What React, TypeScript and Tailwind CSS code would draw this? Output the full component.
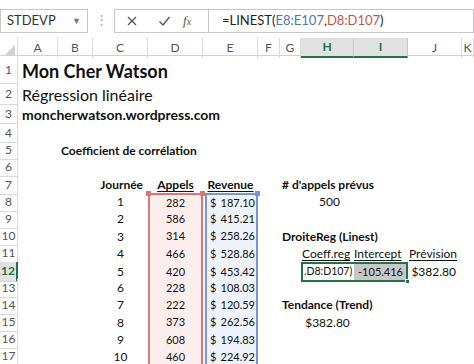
import type { ReactNode } from "react";

const GRID = "grid grid-cols-[18px_40px_35px_55px_55px_55px_22px_21px_53px_54px_54px_1fr]";
const LETTERS = ["A", "B", "C", "D", "E", "F", "G", "H", "I", "J", "K"];

type Cells = Partial<Record<string, ReactNode>>;

const rowsData = [
    [1, "282", "187.10"],
    [2, "586", "415.21"],
    [3, "314", "258.26"],
    [4, "466", "528.86"],
    [5, "420", "453.42"],
    [6, "228", "108.03"],
    [7, "222", "120.59"],
    [8, "373", "262.56"],
    [9, "608", "194.83"],
    [10, "460", "224.92"],
] as const;

const cellClass = (col: string, n: number) => {
    if (n >= 8 && col === "D")
        return n === 8
            ? "bg-[#fdeeee] border-x-2 border-t-2 border-[#e07474] justify-center text-[11px]"
            : "bg-[#fdeeee] border-x-2 border-[#e07474] justify-center text-[11px]";
    if (n >= 8 && col === "E")
        return n === 8
            ? "ml-[2px] bg-[#eef3fb] border-x-2 border-t-2 border-[#7895cf] justify-between pl-[3px] pr-[1px] text-[11px]"
            : "ml-[2px] bg-[#eef3fb] border-x-2 border-[#7895cf] justify-between pl-[3px] pr-[1px] text-[11px]";
    if (n === 12 && col === "H") return "border-y-2 border-l-2 border-[#217346] pl-[1px] text-[10.5px]";
    if (n === 12 && col === "I") return "border-y-2 border-r-2 border-[#217346] justify-end text-[11px]";
    return "";
};

const Row = ({ n, h, cells, active }: { n: number; h: string; cells: Cells; active?: boolean }) => (
    <div className={`${GRID} ${h}`}>
        <div
            className={
                active
                    ? "flex items-center justify-center border-r-2 border-b border-[#217346] border-b-[#d4d4d4] bg-[#e1e1e1] text-[12px] font-bold text-[#217346]"
                    : "flex items-center justify-center border-r border-b border-[#dadada] text-[12px] text-[#555]"
            }
        >
            {n}
        </div>
        {LETTERS.map((l) => (
            <div key={l} className={`relative flex items-center whitespace-nowrap ${cellClass(l, n)}`}>
                {cells[l]}
            </div>
        ))}
    </div>
);

const App = () => {
    return (
        <div className="h-[364px] w-[474px] overflow-hidden bg-white font-['Lato',sans-serif] text-[12px] text-[#111]">
            {/* formula bar */}
            <div className="flex h-[38px] items-start pt-[9px]">
                <div className="flex h-[24px] w-[88px] items-center justify-between border border-[#c6c6c6] pl-[6px] pr-[6px] text-[13px] text-[#333]">
                    <span>STDEVP</span>
                    <span className="text-[9px] text-[#777]">▼</span>
                </div>
                <div className="flex w-[26px] justify-center pt-[4px] text-[13px] leading-none text-[#aaa]">⋮</div>
                <div className="flex h-[24px] w-[94px] items-center border-y border-l border-[#c6c6c6] text-[#555]">
                    <svg width="12" height="12" viewBox="0 0 12 12" className="ml-[11px]">
                        <path d="M2 2 L10 10 M10 2 L2 10" stroke="#555" strokeWidth="1.3" />
                    </svg>
                    <svg width="13" height="12" viewBox="0 0 13 12" className="ml-[20px]">
                        <path d="M1.5 6.5 L5 10 L11.5 2" stroke="#555" strokeWidth="1.4" fill="none" />
                    </svg>
                    <span className="ml-[12px] font-['Liberation_Serif',serif] text-[13px] italic text-[#555]">
                        f<span className="text-[10px]">x</span>
                    </span>
                </div>
                <div className="flex h-[24px] flex-1 items-center border border-[#c6c6c6] pl-[13px] text-[13px] text-[#222]">
                    =LINEST(<span className="text-[#4f74bd]">E8:E107</span>,<span className="text-[#c25353]">D8:D107</span>)
                </div>
            </div>

            {/* column headers */}
            <div className={`${GRID} h-[18px] border-b border-[#d0d0d0] text-[12px] text-[#555]`}>
                <div className="flex items-end justify-end border-r border-[#dadada] pb-[2px] pr-[2px]">
                    <svg width="11" height="11" viewBox="0 0 11 11">
                        <path d="M11 0 L11 11 L0 11 Z" fill="#d0d0d0" />
                    </svg>
                </div>
                {LETTERS.map((l) =>
                    l === "H" || l === "I" ? (
                        <div
                            key={l}
                            className="flex items-center justify-center border-r border-b-2 border-[#c6c6c6] border-b-[#217346] bg-[#e1e1e1] font-bold text-[#217346]"
                        >
                            {l}
                        </div>
                    ) : (
                        <div key={l} className="flex items-center justify-center border-r border-[#dadada]">
                            {l}
                        </div>
                    )
                )}
            </div>

            <Row
                n={1}
                h="h-[28px]"
                cells={{
                    A: <span className="self-end pl-[4px] text-[18px] leading-[26px] font-bold">Mon Cher Watson</span>,
                }}
            />
            <Row
                n={2}
                h="h-[21px]"
                cells={{ A: <span className="self-end pl-[4px] text-[16px] leading-[20px]">Régression linéaire</span> }}
            />
            <Row
                n={3}
                h="h-[19px]"
                cells={{
                    A: <span className="self-end pl-[4px] text-[14px] leading-[18px] font-bold">moncherwatson.wordpress.com</span>,
                }}
            />
            <Row n={4} h="h-[17.2px]" cells={{}} />
            <Row
                n={5}
                h="h-[17.2px]"
                cells={{ B: <span className="pl-[3px] font-bold">Coefficient de corrélation</span> }}
            />
            <Row n={6} h="h-[17.2px]" cells={{}} />
            <Row
                n={7}
                h="h-[17.2px]"
                cells={{
                    C: <span className="w-full pr-[5px] text-right font-bold">Journée</span>,
                    D: <span className="w-full text-center font-bold underline underline-offset-2">Appels</span>,
                    E: <span className="w-full text-center font-bold underline underline-offset-2">Revenue</span>,
                    G: <span className="pl-[2px] font-bold"># d'appels prévus</span>,
                }}
            />
            {rowsData.map(([day, calls, rev]) => {
                const n = day + 7;
                const extra: Cells = {};
                if (n === 8) extra.H = <span className="w-full pl-[4px] text-center">500</span>;
                if (n === 10) extra.G = <span className="pl-[2px] font-bold">DroiteReg (Linest)</span>;
                if (n === 11) {
                    extra.H = <span className="pl-[1px] underline underline-offset-2">Coeff.reg</span>;
                    extra.I = <span className="underline underline-offset-2">Intercept</span>;
                    extra.J = <span className="pl-[1px] underline underline-offset-2">Prévision</span>;
                }
                if (n === 12) {
                    extra.H = <span>.D8:D107)</span>;
                    extra.I = (
                        <span className="flex h-full w-full items-center justify-end bg-[#c8c8c8] pr-[3px]">
                            -105.416
                            <span className="absolute -bottom-[4px] -right-[4px] h-[5px] w-[5px] border border-white bg-[#217346]" />
                        </span>
                    );
                    extra.J = <span className="w-full pr-[6px] text-right">$382.80</span>;
                }
                if (n === 14) extra.G = <span className="pl-[2px] font-bold">Tendance (Trend)</span>;
                if (n === 15) extra.H = <span className="w-full text-center">$382.80</span>;
                return (
                    <Row
                        key={n}
                        n={n}
                        h="h-[17.2px]"
                        active={n === 12}
                        cells={{
                            C: <span className="w-full text-center">{day}</span>,
                            D: (
                                <>
                                    {calls}
                                    {n === 8 && (
                                        <>
                                            <span className="absolute -left-[4px] -top-[4px] h-[5px] w-[5px] bg-[#e07474]" />
                                            <span className="absolute -right-[4px] -top-[4px] h-[5px] w-[5px] bg-[#e07474]" />
                                        </>
                                    )}
                                </>
                            ),
                            E: (
                                <>
                                    <span>$</span>
                                    <span>{rev}</span>
                                    {n === 8 && (
                                        <span className="absolute -right-[4px] -top-[4px] h-[5px] w-[5px] bg-[#7895cf]" />
                                    )}
                                </>
                            ),
                            ...extra,
                        }}
                    />
                );
            })}
        </div>
    );
};

export default App;
